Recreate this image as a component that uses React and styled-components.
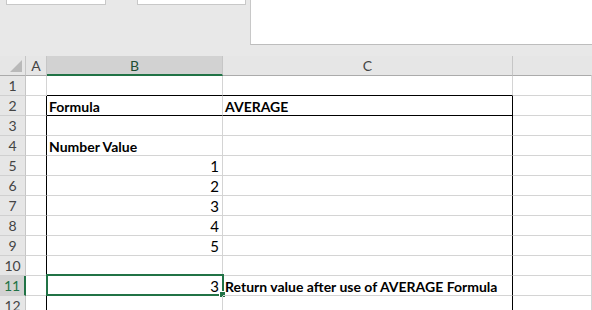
import React from "react";
import styled, { createGlobalStyle } from "styled-components";

const GREEN = "#217346";
const GRID = "#d4d4d4";

const GlobalStyle = createGlobalStyle`
  html, body {
    margin: 0;
    padding: 0;
    background: #ffffff;
    overflow: hidden;
  }
  body {
    font-family: Lato, "Liberation Sans", sans-serif;
  }
`;

const Page = styled.div`
  width: 592px;
  height: 310px;
  overflow: hidden;
`;

// ribbon / name box / formula bar remains at the top
const TopBar = styled.div`
  height: 56px;
  display: flex;
  align-items: flex-start;
  background: #e8e8e8;
`;

const FieldBox = styled.div`
  box-sizing: border-box;
  width: ${(p) => p.$w}px;
  height: 5px;
  margin-left: ${(p) => p.$ml}px;
  background: #ffffff;
  border: 1px solid #c8c8c8;
  border-top: none;
`;

const FormulaPanel = styled.div`
  box-sizing: border-box;
  flex: 1;
  height: 45px;
  margin-left: 4px;
  background: #ffffff;
  border-left: 1px solid #c8c8c8;
  border-bottom: 1px solid #bdbdbd;
`;

const Sheet = styled.div`
  display: grid;
  grid-template-columns: 26px 21px 176px 290px 1fr;
  grid-auto-rows: 20px;
  background: #ffffff;
`;

const Corner = styled.div`
  box-sizing: border-box;
  position: relative;
  background: #e6e6e6;
  border-right: 1px solid #c6c6c6;
  border-bottom: 1px solid #ababab;
`;

const CornerMark = styled.svg`
  position: absolute;
  left: 10px;
  top: 4px;
`;

const ColHead = styled.div`
  box-sizing: border-box;
  display: flex;
  align-items: center;
  justify-content: center;
  background: ${(p) => (p.$active ? "#d2d2d2" : "#e6e6e6")};
  border-right: 1px solid ${(p) => (p.$last ? "transparent" : "#c6c6c6")};
  border-bottom: ${(p) => (p.$active ? `2px solid ${GREEN}` : "1px solid #ababab")};
  color: ${(p) => (p.$active ? "#1e4f33" : "#444444")};
  font-size: 14px;
`;

const RowHead = styled.div`
  box-sizing: border-box;
  display: flex;
  align-items: center;
  justify-content: center;
  background: ${(p) => (p.$active ? "#d2d2d2" : "#e6e6e6")};
  border-right: ${(p) => (p.$active ? `2px solid ${GREEN}` : "1px solid #c6c6c6")};
  border-bottom: 1px solid #d0d0d0;
  color: ${(p) => (p.$active ? GREEN : "#444444")};
  font-size: 14px;
`;

const Cell = styled.div`
  box-sizing: border-box;
  position: relative;
  display: flex;
  align-items: center;
  justify-content: ${(p) => (p.$num ? "flex-end" : "flex-start")};
  padding: 1px 3px 0 2px;
  border-right: 1px solid ${(p) => p.$r || GRID};
  border-bottom: 1px solid ${(p) => p.$b || GRID};
  color: #000000;
  font-size: ${(p) => (p.$num ? 15 : 14)}px;
  font-weight: ${(p) => (p.$bold ? 700 : 400)};
  white-space: nowrap;
`;

const Selection = styled.div`
  position: absolute;
  top: -2px;
  left: -1px;
  right: -2px;
  bottom: -1px;
  border: 2px solid ${GREEN};
  pointer-events: none;
`;

const FillHandle = styled.div`
  position: absolute;
  right: -4px;
  bottom: -4px;
  width: 5px;
  height: 5px;
  background: ${GREEN};
  border: 1px solid #ffffff;
`;

const rows = [
  { n: 1, b: "", c: "" },
  { n: 2, b: "Formula", c: "AVERAGE", bold: true },
  { n: 3, b: "", c: "" },
  { n: 4, b: "Number Value", c: "", bold: true },
  { n: 5, b: "1", c: "", num: true },
  { n: 6, b: "2", c: "", num: true },
  { n: 7, b: "3", c: "", num: true },
  { n: 8, b: "4", c: "", num: true },
  { n: 9, b: "5", c: "", num: true },
  { n: 10, b: "", c: "" },
  { n: 11, b: "3", c: "Return value after use of AVERAGE Formula", num: true, active: true },
  { n: 12, b: "", c: "" },
];

export default function App() {
  return (
    <Page>
      <GlobalStyle />
      <TopBar>
        <FieldBox $w={100} $ml={6} />
        <FieldBox $w={109} $ml={31} />
        <FormulaPanel />
      </TopBar>
      <Sheet>
        <Corner>
          <CornerMark width="12" height="12" viewBox="0 0 12 12">
            <polygon points="12,0 12,12 0,12" fill="#b9b9b9" />
          </CornerMark>
        </Corner>
        <ColHead>A</ColHead>
        <ColHead $active>B</ColHead>
        <ColHead>C</ColHead>
        <ColHead $last />

        {rows.map((r) => {
          const boxed = r.n >= 2;
          const edge = r.n === 1 || r.n === 2 ? "#000" : undefined;
          return (
            <React.Fragment key={r.n}>
              <RowHead $active={r.active}>{r.n}</RowHead>
              <Cell $r={boxed ? "#000" : undefined} />
              <Cell $b={edge} $num={r.num} $bold={r.bold}>
                {r.active && (
                  <Selection>
                    <FillHandle />
                  </Selection>
                )}
                {r.b}
              </Cell>
              <Cell $b={edge} $r={boxed ? "#000" : undefined} $bold={r.bold || r.active}>
                {r.c}
              </Cell>
              <Cell />
            </React.Fragment>
          );
        })}
      </Sheet>
    </Page>
  );
}
